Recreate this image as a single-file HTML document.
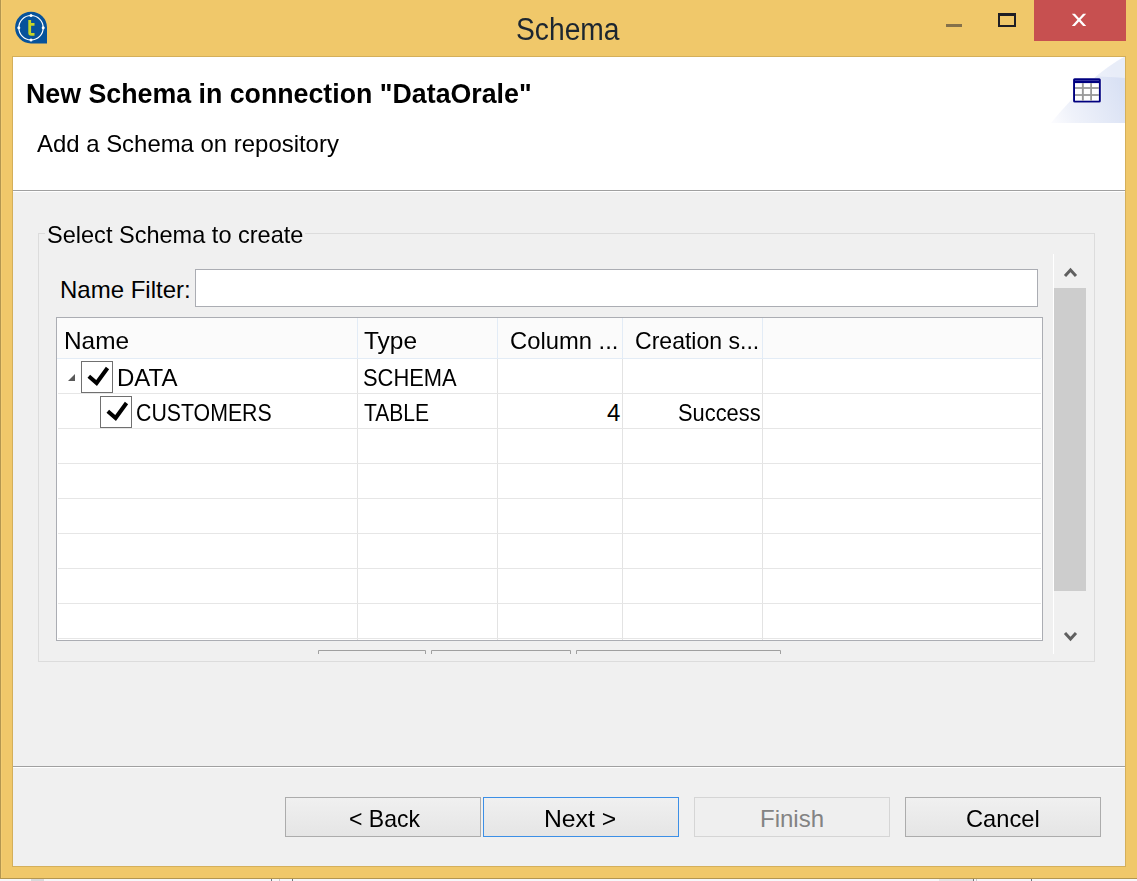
<!DOCTYPE html>
<html><head><meta charset="utf-8">
<style>
html,body{margin:0;padding:0;}
body{width:1137px;height:881px;position:relative;overflow:hidden;background:#f7f8fa;font-family:"Liberation Sans",sans-serif;color:#000;}
.a{position:absolute;}
.t{position:absolute;white-space:nowrap;line-height:1;}
#frame{left:0;top:0;width:1137px;height:879px;background:#f0c86a;border-left:1px solid #b39650;border-bottom:1px solid #b39650;box-sizing:border-box;}
#content{left:12px;top:56px;width:1114px;height:811px;border:1px solid #d4af5a;box-sizing:border-box;background:#f0f0f0;overflow:hidden;}
.btn{width:196px;height:40px;border:1px solid #acacac;box-sizing:border-box;background:linear-gradient(#f0f0f0,#e5e5e5);}
</style></head>
<body>
<div class="a" id="frame"></div>
<div class="a" style="left:1px;top:0;width:1px;height:878px;background:#f3cd72;"></div>
<!-- title bar -->
<svg class="a" style="left:14px;top:10px" width="36" height="36" viewBox="0 0 36 36">
  <path d="M17 1.7 A15.9 15.9 0 1 0 17 33.5 L33 33.5 L33 17.6 A15.9 15.9 0 0 0 17 1.7 Z" fill="#06529b"/>
  <circle cx="17" cy="17.7" r="12.2" fill="none" stroke="#fff" stroke-width="1.2"/>
  <circle cx="17" cy="5.5" r="1.5" fill="#fff"/><circle cx="17" cy="29.9" r="1.5" fill="#fff"/>
  <circle cx="4.8" cy="17.7" r="1.5" fill="#fff"/><circle cx="29.2" cy="17.7" r="1.5" fill="#fff"/>
  <path d="M15.7 9.9 V23 Q15.7 24.4 17.2 24.4 H20.5 M14.3 14.4 H20.5" fill="none" stroke="#c5d52a" stroke-width="2.8"/>
</svg>
<div class="t" id="ttl" style="left:516px;top:14px;font-size:31px;color:#1c2630;transform:scaleX(0.9107);transform-origin:0 0;">Schema</div>
<div class="a" style="left:946px;top:24px;width:16px;height:3px;background:#85714a;"></div>
<div class="a" style="left:998px;top:13px;width:18px;height:14px;border:2px solid #1e1e24;border-top-width:3px;box-sizing:border-box;"></div>
<div class="a" style="left:1034px;top:0;width:92px;height:41px;background:#c75050;"></div>
<svg class="a" style="left:1071px;top:13px" width="16" height="14" viewBox="0 0 16 14"><polygon points="0.8,0.7 3.9,0.7 8,5.16 12.1,0.7 15.2,0.7 9.55,6.85 15.2,13 12.1,13 8,8.54 3.9,13 0.8,13 6.45,6.85" fill="#fff"/></svg>

<div class="a" id="content"></div>
<!-- header -->
<div class="a" style="left:13px;top:57px;width:1112px;height:133px;background:#fff;"></div>
<svg class="a" style="left:1051px;top:57px" width="74" height="66" viewBox="0 0 74 66">
  <defs><linearGradient id="gg" x1="0" y1="1" x2="1" y2="0.6"><stop offset="0" stop-color="#fdfdff"/><stop offset="0.3" stop-color="#eff2fa"/><stop offset="1" stop-color="#d9e1f4"/></linearGradient>
  <filter id="bl" x="-10%" y="-10%" width="120%" height="120%"><feGaussianBlur stdDeviation="0.7"/></filter>
  <clipPath id="cp"><rect x="0" y="0" width="74" height="66"/></clipPath></defs>
  <g clip-path="url(#cp)"><g filter="url(#bl)">
  <path d="M-1 67 Q41.3 16 75 -1 V67 Z" fill="url(#gg)"/>
  <path d="M34 19 Q50 19.5 75 21 V-1 Q56 8.5 34 19 Z" fill="#fff" fill-opacity="0.4"/>
  </g></g>
</svg>
<div class="a" style="left:13px;top:190px;width:1112px;height:1px;background:#a0a0a0;"></div>
<div class="a" style="left:13px;top:191px;width:1112px;height:1px;background:#fff;"></div>
<svg class="a" style="left:1072px;top:78px" width="30" height="26" viewBox="0 0 30 26">
  <rect x="0.6" y="-0.2" width="28.7" height="25.2" rx="2" fill="#fff"/>
  <rect x="1.1" y="0.3" width="27.7" height="24.2" rx="1.5" fill="#000080"/>
  <rect x="3" y="5.1" width="23.9" height="17.6" fill="#fff"/>
  <rect x="3" y="2.2" width="23.9" height="0.7" fill="#5050b0"/>
  <rect x="9.9" y="5.1" width="1.9" height="17.6" fill="#999"/>
  <rect x="18.2" y="5.1" width="1.8" height="17.6" fill="#999"/>
  <rect x="3" y="9.1" width="23.9" height="1.8" fill="#999"/>
  <rect x="3" y="16.1" width="23.9" height="1.8" fill="#999"/>
</svg>
<div class="t" id="h1" style="left:26px;top:80px;font-size:27.5px;font-weight:bold;transform:scaleX(0.9729);transform-origin:0 0;">New Schema in connection "DataOrale"</div>
<div class="t" id="h2" style="left:37px;top:132px;font-size:24px;transform:scaleX(0.9967);transform-origin:0 0;">Add a Schema on repository</div>

<!-- group -->
<div class="a" style="left:38px;top:233px;width:1057px;height:429px;border:1px solid #dcdcdc;box-sizing:border-box;"></div>
<div class="a" style="left:45px;top:222px;width:260px;height:20px;background:#f0f0f0;"></div>
<div class="t" id="g1" style="left:47px;top:223px;font-size:24px;transform:scaleX(0.9807);transform-origin:0 0;">Select Schema to create</div>
<div class="t" id="nf" style="left:60px;top:278px;font-size:24px;transform:scaleX(1);transform-origin:0 0;">Name Filter:</div>
<div class="a" style="left:195px;top:269px;width:843px;height:38px;border:1px solid #abadb3;box-sizing:border-box;background:#fff;"></div>

<!-- table -->
<div class="a" style="left:56px;top:317px;width:987px;height:324px;border:1px solid #abadb3;box-sizing:border-box;background:#fff;overflow:hidden;">
  <div class="a" style="left:0;top:0;width:985px;height:40px;background:#fbfbfb;"></div>
  <div class="a" style="left:0;top:40px;width:984px;height:1px;background:#e3ecf6;"></div>
  <div class="a" style="left:300px;top:0;width:1px;height:40px;background:#e3ecf6;"></div>
  <div class="a" style="left:440px;top:0;width:1px;height:40px;background:#e3ecf6;"></div>
  <div class="a" style="left:565px;top:0;width:1px;height:40px;background:#e3ecf6;"></div>
  <div class="a" style="left:705px;top:0;width:1px;height:40px;background:#e3ecf6;"></div>
  <div class="a" style="left:300px;top:41px;width:1px;height:290px;background:#e3e3e3;"></div>
  <div class="a" style="left:440px;top:41px;width:1px;height:290px;background:#e3e3e3;"></div>
  <div class="a" style="left:565px;top:41px;width:1px;height:290px;background:#e3e3e3;"></div>
  <div class="a" style="left:705px;top:41px;width:1px;height:290px;background:#e3e3e3;"></div>
  <div class="a" style="left:1px;top:75px;width:983px;height:1px;background:#e6e6e6;"></div>
  <div class="a" style="left:1px;top:110px;width:983px;height:1px;background:#e6e6e6;"></div>
  <div class="a" style="left:1px;top:145px;width:983px;height:1px;background:#e6e6e6;"></div>
  <div class="a" style="left:1px;top:180px;width:983px;height:1px;background:#e6e6e6;"></div>
  <div class="a" style="left:1px;top:215px;width:983px;height:1px;background:#e6e6e6;"></div>
  <div class="a" style="left:1px;top:250px;width:983px;height:1px;background:#e6e6e6;"></div>
  <div class="a" style="left:1px;top:285px;width:983px;height:1px;background:#e6e6e6;"></div>
  <div class="a" style="left:1px;top:320px;width:983px;height:1px;background:#e6e6e6;"></div>
</div>
<div class="t" id="c1" style="left:64px;top:329px;font-size:24px;transform:scaleX(1.0164);transform-origin:0 0;">Name</div>
<div class="t" id="c2" style="left:364px;top:329px;font-size:24px;transform:scaleX(1.0196);transform-origin:0 0;">Type</div>
<div class="t" id="c3" style="left:510px;top:329px;font-size:24px;transform:scaleX(0.9906);transform-origin:0 0;">Column ...</div>
<div class="t" id="c4" style="left:635px;top:329px;font-size:24px;transform:scaleX(0.9603);transform-origin:0 0;">Creation s...</div>
<svg class="a" style="left:68px;top:374px" width="8" height="8" viewBox="0 0 8 8"><path d="M0 7 L7 7 L7 0 Z" fill="#595959"/></svg>
<div class="a" style="left:81px;top:361px;width:32px;height:32px;border:1px solid #707070;box-sizing:border-box;background:#fff;"></div>
<svg class="a" style="left:81px;top:361px" width="32" height="32" viewBox="0 0 32 32"><path d="M7.8 15.3 L15.6 22 L26.5 7" fill="none" stroke="#000" stroke-width="4"/></svg>
<div class="t" id="r1" style="left:117px;top:366px;font-size:24px;transform:scaleX(1.0006);transform-origin:0 0;">DATA</div>
<div class="t" id="r1b" style="left:363px;top:366px;font-size:24px;transform:scaleX(0.9118);transform-origin:0 0;">SCHEMA</div>
<div class="a" style="left:100px;top:396px;width:32px;height:32px;border:1px solid #707070;box-sizing:border-box;background:#fff;"></div>
<svg class="a" style="left:100px;top:396px" width="32" height="32" viewBox="0 0 32 32"><path d="M7.8 15.3 L15.6 22 L26.5 7" fill="none" stroke="#000" stroke-width="4"/></svg>
<div class="t" id="r2" style="left:136px;top:401px;font-size:24px;transform:scaleX(0.8874);transform-origin:0 0;">CUSTOMERS</div>
<div class="t" id="r2b" style="left:364px;top:401px;font-size:24px;transform:scaleX(0.8767);transform-origin:0 0;">TABLE</div>
<div class="t" id="r2c" style="left:607px;top:401px;font-size:24px;transform:scaleX(1);transform-origin:0 0;">4</div>
<div class="t" id="r2d" style="left:678px;top:401px;font-size:24px;transform:scaleX(0.9101);transform-origin:0 0;">Success</div>

<!-- brackets -->
<svg class="a" style="left:0;top:645px" width="1137" height="12">
  <path d="M318.5 9 V5.5 H425.5 V9 M431.5 9 V5.5 H570.5 V9 M576.5 9 V5.5 H780.5 V9" fill="none" stroke="#a0a0a0" stroke-width="1"/>
</svg>

<!-- scrollbar -->
<div class="a" style="left:1053px;top:254px;width:1px;height:400px;background:#fff;"></div>
<div class="a" style="left:1054px;top:288px;width:32px;height:303px;background:#cdcdcd;"></div>
<svg class="a" style="left:1063px;top:266px" width="15" height="12" viewBox="0 0 15 12"><path d="M2 10 L7.5 4 L13 10" fill="none" stroke="#606060" stroke-width="3"/></svg>
<svg class="a" style="left:1063px;top:631px" width="15" height="12" viewBox="0 0 15 12"><path d="M2 2 L7.5 8 L13 2" fill="none" stroke="#606060" stroke-width="3"/></svg>

<!-- bottom -->
<div class="a" style="left:13px;top:766px;width:1112px;height:1px;background:#a0a0a0;"></div>
<div class="a" style="left:13px;top:767px;width:1112px;height:1px;background:#fff;"></div>
<div class="a btn" style="left:285px;top:797px;"></div>
<div class="a btn" style="left:483px;top:797px;border-color:#3c8fe6;"></div>
<div class="a btn" style="left:694px;top:797px;border-color:#d5d5d5;background:#efefef;"></div>
<div class="a btn" style="left:905px;top:797px;"></div>
<div class="t" id="b1" style="left:349px;top:807px;font-size:24px;transform:scaleX(0.9589);transform-origin:0 0;">&lt; Back</div>
<div class="t" id="b2" style="left:544px;top:807px;font-size:24px;transform:scaleX(1.0299);transform-origin:0 0;">Next &gt;</div>
<div class="t" id="b3" style="left:760px;top:807px;font-size:24px;color:#838383;transform:scaleX(1);transform-origin:0 0;">Finish</div>
<div class="t" id="b4" style="left:966px;top:807px;font-size:24px;transform:scaleX(0.9861);transform-origin:0 0;">Cancel</div>

<!-- strip below -->
<div class="a" style="left:31px;top:879px;width:13px;height:2px;background:#d9dadc;"></div>
<div class="a" style="left:271px;top:879px;width:1px;height:2px;background:#70737a;"></div>
<div class="a" style="left:279px;top:879px;width:1px;height:2px;background:#c8cacd;"></div>
<div class="a" style="left:292px;top:879px;width:1px;height:2px;background:#70737a;"></div>
<div class="a" style="left:939px;top:879px;width:34px;height:2px;background:#e6e6e6;"></div>
<div class="a" style="left:973px;top:879px;width:1px;height:2px;background:#70737a;"></div>
<div class="a" style="left:976px;top:879px;width:1px;height:2px;background:#c8cacd;"></div>
<div class="a" style="left:1031px;top:879px;width:1px;height:2px;background:#70737a;"></div>
</body></html>
